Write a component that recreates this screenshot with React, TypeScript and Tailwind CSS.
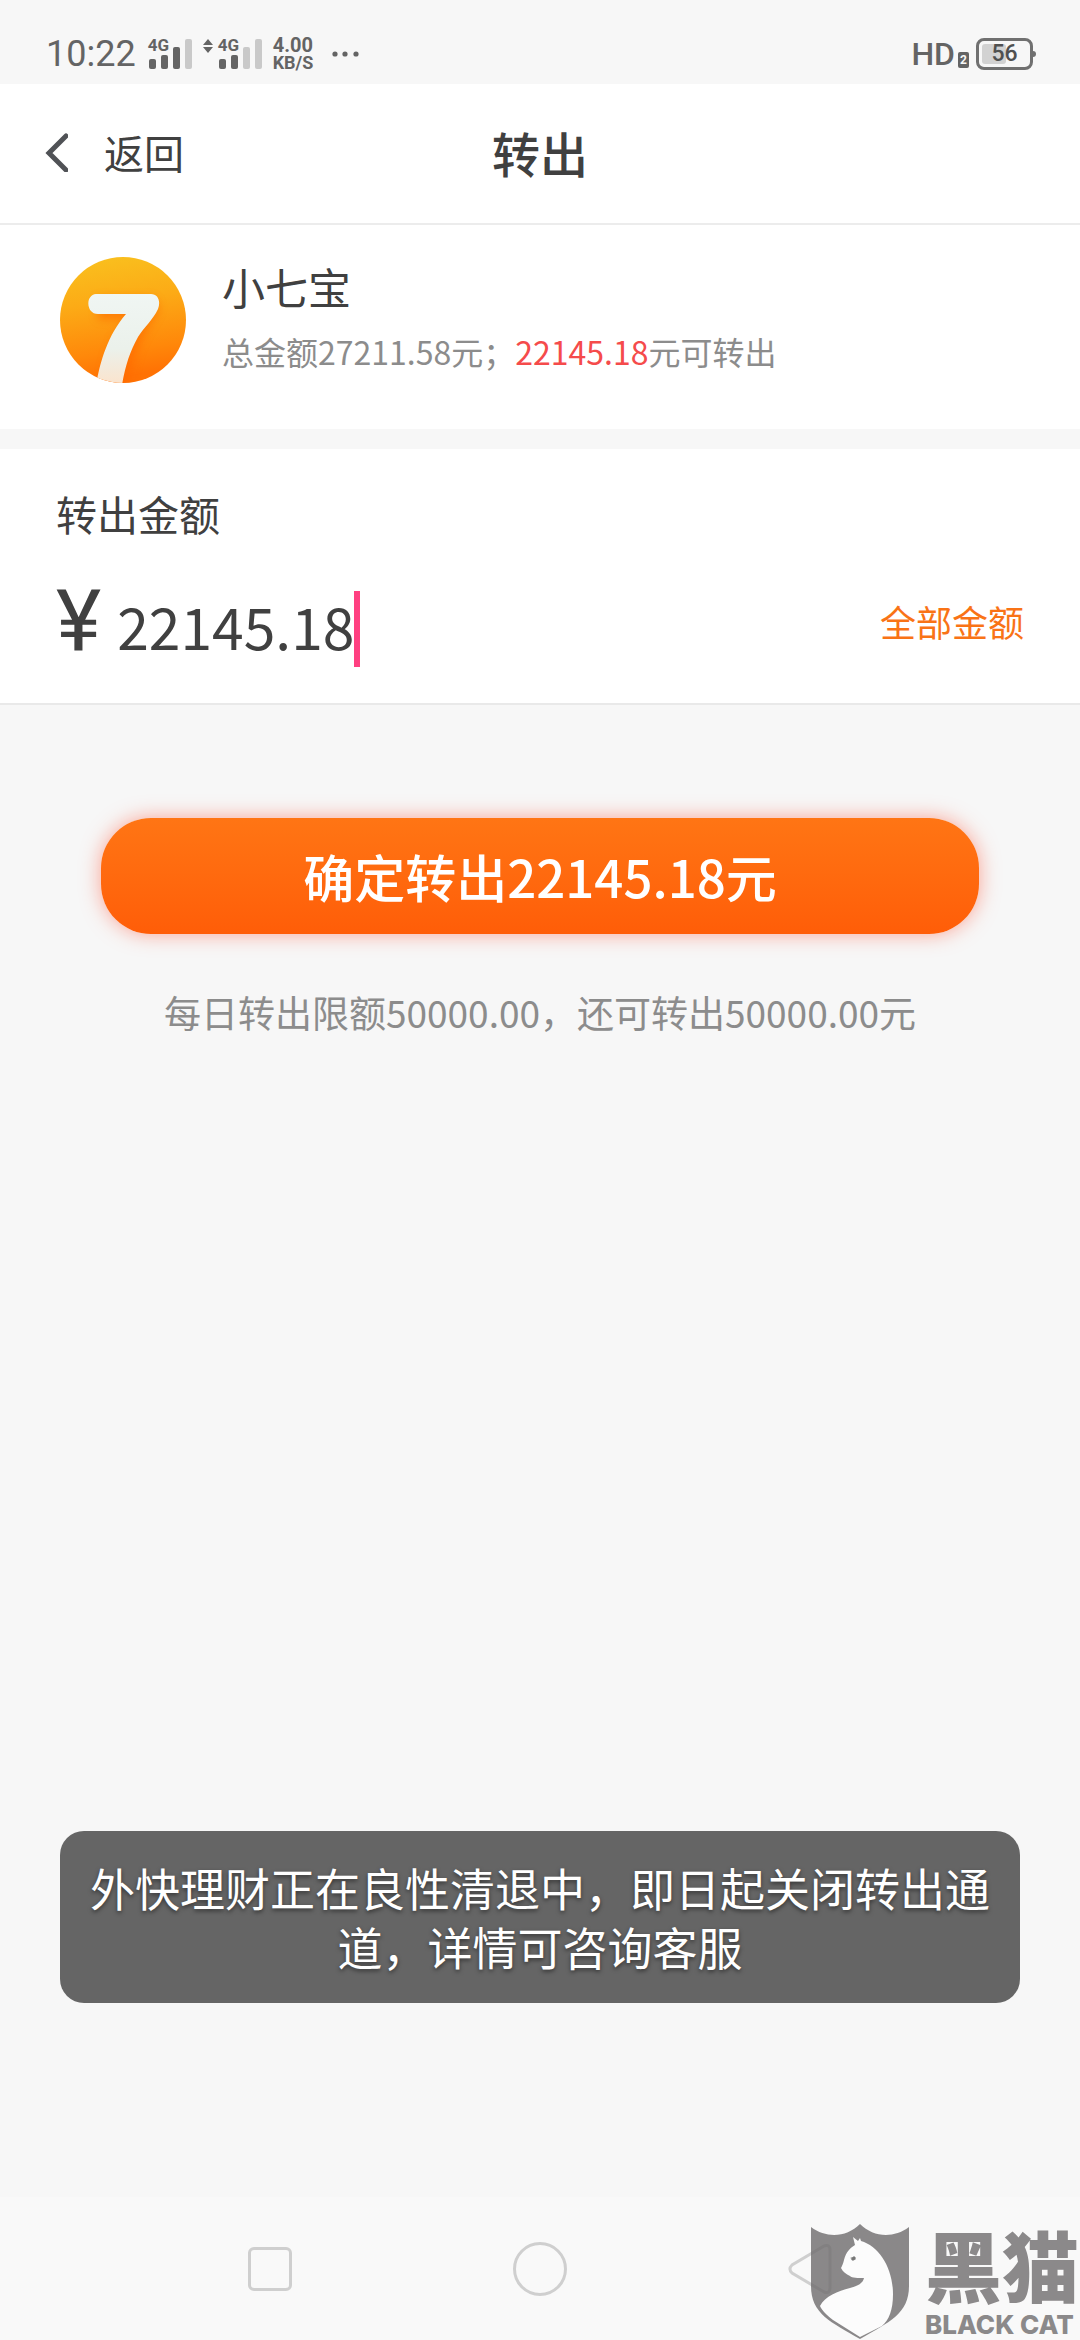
import React from 'react';

const account = {
  name: '小七宝',
  total: '27211.58',
  available: '22145.18',
  dailyLimit: '50000.00',
  dailyLeft: '50000.00',
};

// Heights of the four signal bars, left to right
const BARS = [10, 14, 22, 30];

const Signal: React.FC<{ level: number }> = ({ level }) => (
  <div className="relative w-[46px] h-8">
    <svg className="w-full h-full" viewBox="0 0 46 32">
      {BARS.map((h, i) => (
        <rect
          key={h}
          x={1 + i * 12}
          y={31 - h}
          width="7"
          height={h}
          rx="2"
          fill={i < level ? '#646464' : '#c9c9c9'}
        />
      ))}
    </svg>
    <span className="absolute left-0 top-0 text-[17px] leading-[14px] font-bold">4G</span>
  </div>
);

const StatusBar: React.FC = () => (
  <div className="h-[84px] pt-6 pl-[46px] pr-11 flex items-center justify-between text-[#646464] font-[Roboto,sans-serif]">
    <div className="flex items-center">
      <span className="text-[36px] leading-9 mr-3">10:22</span>
      <Signal level={3} />
      <svg className="w-[10px] h-8 ml-[9px] mr-[5px]" viewBox="0 0 10 32" fill="#646464">
        <path d="M0 7 L5 1 L10 7 Z M0 9 H10 L5 15 Z" />
      </svg>
      <Signal level={2} />
      <div className="ml-[9px] flex flex-col font-bold">
        <span className="text-[20px] leading-[18px]">4.00</span>
        <span className="text-[18px] leading-[18px]">KB/S</span>
      </div>
      <svg className="w-7 h-2 ml-[18px]" viewBox="0 0 28 8" fill="#646464">
        <circle cx="4" cy="4" r="2.6" />
        <circle cx="14" cy="4" r="2.6" />
        <circle cx="25" cy="4" r="2.6" />
      </svg>
    </div>

    <div className="flex items-center">
      <span className="text-[32px] leading-9 font-medium">HD</span>
      <span className="w-[11px] h-4 mt-3 ml-[3px] rounded-[2px] bg-[#646464] text-[#f7f7f7] text-[12px] leading-4 font-bold text-center">
        2
      </span>
      <div className="relative ml-[7px] w-[57px] h-8 rounded-lg border-[3px] border-[#707070] flex items-center justify-center">
        <div className="absolute left-[3px] top-[3px] w-6 h-5 rounded-[3px] bg-[#d2d2d2]" />
        <span className="relative text-[23px] leading-6 font-medium text-[#505050]">56</span>
      </div>
      <div className="w-[3px] h-[6px] rounded-r-full bg-[#707070]" />
    </div>
  </div>
);

const Logo: React.FC = () => (
  <svg className="w-[126px] h-[126px] shrink-0" viewBox="0 0 126 126">
    <defs>
      <linearGradient id="coin" x1="0" y1="0" x2="0.15" y2="1">
        <stop offset="0" stopColor="#f9c21f" />
        <stop offset="0.4" stopColor="#fcab16" />
        <stop offset="0.8" stopColor="#ff880a" />
        <stop offset="1" stopColor="#ff7204" />
      </linearGradient>
      <linearGradient id="seven" x1="0" y1="0" x2="0" y2="1">
        <stop offset="0" stopColor="#f0f6f3" />
        <stop offset="0.6" stopColor="#ebf1eb" />
        <stop offset="1" stopColor="#fbe3cc" />
      </linearGradient>
      <filter id="soft" x="-40%" y="-40%" width="180%" height="180%">
        <feGaussianBlur stdDeviation="5" />
      </filter>
      <clipPath id="round">
        <circle cx="63" cy="63" r="63" />
      </clipPath>
    </defs>
    <g clipPath="url(#round)">
      <rect width="126" height="126" fill="url(#coin)" />
      <path
        d="M38 41 H92 Q100 44 97 56 C84 76 74 92 69 130 H42 C46 98 54 78 68 62 H38 Z"
        fill="#ff6a00"
        opacity="0.7"
        filter="url(#soft)"
      />
      <path
        d="M36 37 H91 C98 37 101 44 98 52 C93 63 84 70 78 80 C70 94 65 110 62 128 H36 C40 106 47 79 66 57 H38 C26 57 25 38 36 37 Z"
        fill="url(#seven)"
      />
    </g>
  </svg>
);

const Header: React.FC = () => (
  <header className="h-[141px] px-11 pb-1 grid grid-cols-[1fr_auto_1fr] items-center bg-white border-b-2 border-[#ececec]">
    <button className="flex items-center gap-9 text-[40px] leading-12 cursor-pointer">
      <svg className="w-6 h-10" viewBox="0 0 24 40" fill="none" stroke="#505256" strokeWidth="5" strokeLinecap="round">
        <path d="M22 4 L5 21 L22 38" />
      </svg>
      返回
    </button>
    <h1 className="text-[48px] leading-15 font-medium">转出</h1>
  </header>
);

const Watermark: React.FC = () => (
  <div className="absolute right-0 bottom-0 flex items-end gap-4 text-[#8b898a]">
    <svg className="w-[98px] h-[116px]" viewBox="0 0 98 116">
      <path
        d="M0 3 C16 15 36 13 49 0 C62 13 82 15 98 3 V62 C98 90 78 98 49 115 C20 98 0 90 0 62 Z"
        fill="#6e6c6d"
        opacity="0.8"
      />
      <path
        d="M42 13 L47 17 L49 14 L50 17 C68 22 82 44 82 70 C82 86 78 96 71 102 L49 113 L22 96 C16 91 11 87 9 82 C14 72 27 67 39 64 C47 62 52 59 53 54 C47 54 41 54 39 52 C35 50 32 48 30 44 C31 42 32 40 33 36 C35 28 39 24 44 21 Z"
        fill="#fcfcfc"
      />
      <path d="M39 34 L45 36 L42 33 Z M40 35 Q42 39 45 34 L43 32 Z" fill="#777" />
    </svg>
    <div className="w-[155px] flex flex-col items-start gap-2 whitespace-nowrap">
      <span className="text-[77px] leading-[77px] font-black">黑猫</span>
      <span className="text-[26px] leading-[30px] font-extrabold font-[Inter,sans-serif]">BLACK CAT</span>
    </div>
  </div>
);

const NavBar: React.FC = () => (
  <nav className="relative h-[143px] bg-[#f9f9f9]">
    <div className="h-full mx-[12.5%] grid grid-cols-3 place-items-center">
      <button aria-label="Recent apps" className="w-11 h-11 rounded-md border-3 border-[#cfcfcf]" />
      <button aria-label="Home" className="w-[54px] h-[54px] rounded-full border-3 border-[#cfcfcf]" />
      <button aria-label="Back">
        <svg className="w-[46px] h-[50px]" viewBox="0 0 46 50" fill="none" stroke="#cfcfcf" strokeWidth="3">
          <path d="M37 2 L5 21 Q1 25 5 29 L37 48 Q43 50 43 44 V6 Q43 0 37 2 Z" />
        </svg>
      </button>
    </div>
    <Watermark />
  </nav>
);

const App: React.FC = () => {
  const [amount, setAmount] = React.useState(account.available);

  return (
    <div className="min-h-screen w-full flex flex-col bg-[#f7f7f7] text-[#404040] font-['Noto_Sans_CJK_SC',sans-serif]">
      <StatusBar />
      <Header />

      <main className="grow flex flex-col">
        {/* Account */}
        <section className="bg-white px-15 pt-8 pb-[46px] flex gap-9">
          <Logo />
          <div className="flex flex-col gap-3">
            <h2 className="text-[43px] leading-[58px]">{account.name}</h2>
            <p className="text-[32px] leading-12 text-[#8c8c8c]">
              总金额{account.total}元；<span className="text-[#f54b4b]">{account.available}</span>元可转出
            </p>
          </div>
        </section>

        {/* Amount */}
        <section className="mt-5 bg-white px-14 pt-10 pb-9 border-b-2 border-[#e9e9e9]">
          <label htmlFor="amount" className="block text-[41px] leading-12">转出金额</label>
          <div className="mt-[54px] h-[76px] flex items-start justify-between">
            <div className="flex items-start">
              <span className="text-[86px] leading-15 font-[Roboto,sans-serif]">¥</span>
              <input
                id="amount"
                inputMode="decimal"
                value={amount}
                onChange={(e) => setAmount(e.target.value)}
                className="field-sizing-content ml-4 h-17 text-[57px] leading-17 outline-none"
              />
              <span className="w-[6px] h-[76px] bg-[#ff4081]" />
            </div>
            <button
              onClick={() => setAmount(account.available)}
              className="text-[36px] leading-15 text-[#f97316] cursor-pointer"
            >
              全部金额
            </button>
          </div>
        </section>

        <button className="mx-[101px] mt-[113px] h-[116px] rounded-[50px] bg-linear-to-b from-[#ff7514] to-[#ff5d08] shadow-[0_0_20px_rgba(255,80,50,0.5)] text-white text-[51px] leading-16 font-medium cursor-pointer">
          确定转出{account.available}元
        </button>
        <p className="mt-[54px] text-center text-[37px] leading-12 text-[#8c8c8c]">
          每日转出限额{account.dailyLimit}，还可转出{account.dailyLeft}元
        </p>

        {/* Toast */}
        <div
          role="status"
          className="mx-15 mt-auto mb-[194px] px-7 py-[27px] rounded-3xl bg-[#656565] text-white text-center text-[45px] leading-[59px] [text-shadow:0_2px_4px_rgba(0,0,0,0.5)]"
        >
          外快理财正在良性清退中，即日起关闭转出通道，详情可咨询客服
        </div>
      </main>

      <NavBar />
    </div>
  );
};

export default App;
